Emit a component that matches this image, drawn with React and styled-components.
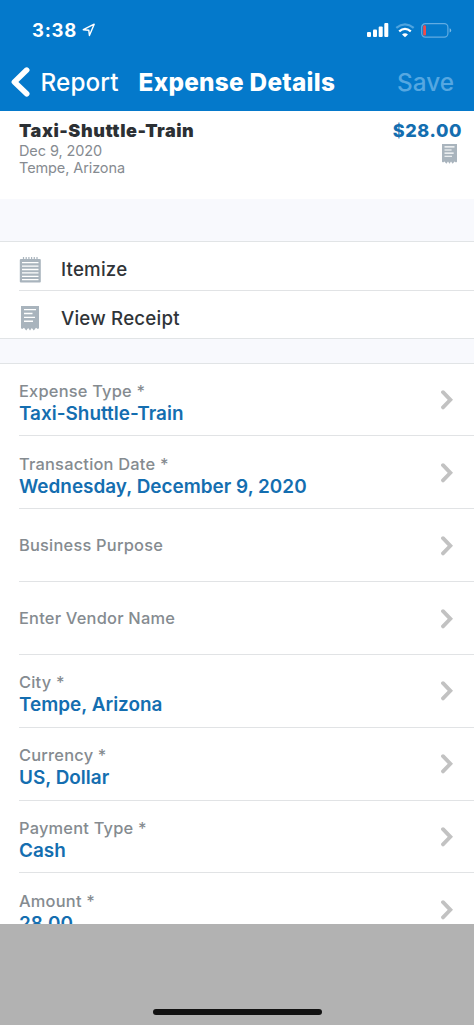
import React from "react";
import styled, { createGlobalStyle } from "styled-components";

const GlobalStyle = createGlobalStyle`
  * { box-sizing: border-box; }
  body { margin: 0; background: #fff; font-family: Inter, "Liberation Sans", sans-serif; }
`;

const Screen = styled.main`
  width: 474px;
  height: 1025px;
  overflow: hidden;
  display: flex;
  flex-direction: column;
  background: #fff;
`;

const Header = styled.header`
  flex: none;
  height: 110.5px;
  background: #0479cb;
  color: #fff;
`;

const StatusBar = styled.div`
  height: 58px;
  padding: 2px 22px 0 32px;
  display: flex;
  align-items: center;
  justify-content: space-between;
`;

const StatusGroup = styled.div`
  display: flex;
  align-items: center;
  gap: ${(p) => p.$gap}px;
`;

const Clock = styled.span`
  font-size: 18.5px;
  font-weight: 700;
  letter-spacing: 0.75px;
`;

const NavBar = styled.nav`
  height: 48px;
  padding: 0 20px 0 11px;
  display: flex;
  align-items: center;
`;

const NavText = styled.span`
  font-size: 24.3px;
  line-height: 30px;
  font-weight: ${(p) => p.$weight || 500};
  letter-spacing: ${(p) => p.$spacing || 0}px;
  color: ${(p) => p.$color || "#fff"};
  margin-left: ${(p) => p.$left};
  white-space: nowrap;
`;

const Summary = styled.section`
  flex: none;
  height: 88.5px;
  padding: 9.5px 12px 0 19px;
  display: flex;
  justify-content: space-between;
`;

const SummaryColumn = styled.div`
  display: flex;
  flex-direction: column;
  align-items: ${(p) => p.$align || "flex-start"};
`;

const SummaryTitle = styled.span`
  font-size: 18px;
  line-height: 22px;
  font-weight: ${(p) => p.$weight};
  letter-spacing: ${(p) => p.$spacing}px;
  color: ${(p) => p.$color};
`;

const SummaryMeta = styled.span`
  font-size: 14.5px;
  line-height: 17.3px;
  letter-spacing: -0.1px;
  color: #868b91;
`;

const ReceiptSlot = styled.div`
  margin: 2px 5px 0 0;
  line-height: 0;
`;

const Band = styled.div`
  flex: none;
  height: ${(p) => p.$height}px;
  background: #f8f9fd;
  border-bottom: 1px solid #e1e4e6;
`;

const ActionList = styled.section`
  flex: none;
  border-bottom: 1px solid #e1e4e6;
`;

const Action = styled.div`
  height: ${(p) => (p.$last ? 47.5 : 48.5)}px;
  padding-top: 8px;
  margin-left: 19px;
  display: flex;
  align-items: center;
  font-size: 18.7px;
  font-weight: 500;
  letter-spacing: 0.2px;
  color: #303438;
  border-bottom: ${(p) => (p.$last ? "none" : "1px solid #e1e3e5")};
`;

const ActionIcon = styled.span`
  width: 42px;
  line-height: 0;
  padding-left: ${(p) => p.$inset || 0}px;
`;

const Fields = styled.section`
  flex: 1;
  min-height: 0;
  overflow: hidden;
`;

const Field = styled.div`
  height: 72.85px;
  margin-left: 19px;
  padding: 1.3px 21px 0 0;
  display: flex;
  align-items: center;
  justify-content: space-between;
  border-bottom: 1px solid #e1e3e5;
`;

const FieldText = styled.div`
  display: flex;
  flex-direction: column;
  padding-top: 6px;
  padding-bottom: ${(p) => (p.$single ? 6 : 0)}px;
`;

const Label = styled.span`
  font-size: 16.4px;
  line-height: 21px;
  font-weight: 500;
  letter-spacing: 0.22px;
  color: #858b90;
`;

const Value = styled.span`
  font-size: 18.9px;
  line-height: 23px;
  font-weight: 600;
  letter-spacing: 0.02px;
  color: #146eb0;
`;

const HomeArea = styled.footer`
  flex: none;
  height: 101px;
  background: #b2b2b2;
  display: flex;
  justify-content: center;
  align-items: flex-end;
  padding: 0 0 10px 1px;
`;

const HomeIndicator = styled.div`
  width: 169px;
  height: 6px;
  border-radius: 3px;
  background: #121212;
`;

const LocationIcon = () => (
  <svg width="14" height="14" viewBox="0 0 14 14" fill="none">
    <path d="M1.3 6.7 12.2 1.2 7.4 12.5 6.8 7.2Z" stroke="#fff" strokeWidth="1.4" strokeLinejoin="round" />
  </svg>
);

const SignalIcon = () => (
  <svg width="22" height="14" viewBox="0 0 22 14" fill="#fff">
    <rect x="0" y="9" width="4" height="5" rx="1" />
    <rect x="6" y="6.5" width="4" height="7.5" rx="1" />
    <rect x="11.7" y="3.5" width="4" height="10.5" rx="1" />
    <rect x="17.3" y="0" width="4" height="14" rx="1" />
  </svg>
);

const WifiIcon = () => (
  <svg width="20" height="15" viewBox="0 0 20 15" fill="none" strokeWidth="2.3">
    <path d="M1.3 4.8Q10-2 18.7 4.8" stroke="#4fa4df" />
    <path d="M4.2 8.4Q10 3.4 15.8 8.4" stroke="#fff" />
    <path d="M7 11.6Q10 8.9 13 11.6L10 14.2Z" fill="#fff" />
  </svg>
);

const BatteryIcon = () => (
  <svg width="31" height="15" viewBox="0 0 31 15" fill="none">
    <rect x="0.7" y="0.7" width="26.2" height="13.4" rx="3.6" stroke="#62ace2" strokeWidth="1.2" />
    <rect x="2.2" y="2.3" width="2.8" height="10.2" rx="1.2" fill="#ef4b4b" />
    <path d="M28.6 5.2Q30.2 5.8 30.2 7.4T28.6 9.6Z" fill="#79b9e6" />
  </svg>
);

const BackIcon = () => (
  <svg width="19" height="30" viewBox="0 0 19 30" fill="none">
    <path d="M15.7 3.1 3.4 14.9 15.7 26.7" stroke="#fff" strokeWidth="5.6" strokeLinecap="round" strokeLinejoin="round" />
  </svg>
);

const ReceiptIcon = ({ width, height }) => (
  <svg width={width} height={height} viewBox="0 0 18 25" preserveAspectRatio="none">
    <path d="M0 0H18V20H0Z" fill="#a9b4bd" />
    <path d="M0 20H18V22.2L16.8 23L15 21.8L12.8 24.6L10.8 22L9 24.6L7.2 22L5.2 24.6L3 21.8L1.2 23L0 22.2Z" fill="#a9b4bd" />
    <path d="M3 3.6H15M3 7.5H11.5M3 11.4H14M3 15.3H12" stroke="#fff" strokeWidth="1.4" />
  </svg>
);

const NotepadIcon = () => (
  <svg width="22" height="26" viewBox="0 0 22 26">
    <rect x="0.8" y="2" width="21" height="23.6" rx="1" fill="#a9b4bd" />
    <path d="M4.5 0V3M7.2 0V3M9.9 0V3M12.6 0V3M15.3 0V3M18 0V3" stroke="#a9b4bd" strokeWidth="1.2" />
    <path d="M3 5.7H19.5M3 9.1H19.5M3 12.5H19.5M3 15.9H19.5M3 19.3H19.5M3 22.6H19.5" stroke="#fff" strokeWidth="1.3" />
  </svg>
);

const Chevron = () => (
  <svg width="12" height="20" viewBox="0 0 12 20" fill="none">
    <path d="M2 2.2 9.4 9.8 2 17.4" stroke="#c2c2c2" strokeWidth="3.8" strokeLinecap="round" />
  </svg>
);

const fields = [
  { label: "Expense Type *", value: "Taxi-Shuttle-Train" },
  { label: "Transaction Date *", value: "Wednesday, December 9, 2020" },
  { label: "Business Purpose" },
  { label: "Enter Vendor Name" },
  { label: "City *", value: "Tempe, Arizona" },
  { label: "Currency *", value: "US, Dollar" },
  { label: "Payment Type *", value: "Cash" },
  { label: "Amount *", value: "28.00" },
];

export default function App() {
  return (
    <>
      <GlobalStyle />
      <Screen>
        <Header>
          <StatusBar>
            <StatusGroup $gap={5}>
              <Clock>3:38</Clock>
              <LocationIcon />
            </StatusGroup>
            <StatusGroup $gap={6}>
              <SignalIcon />
              <WifiIcon />
              <BatteryIcon />
            </StatusGroup>
          </StatusBar>
          <NavBar>
            <BackIcon />
            <NavText $left="10.5px" $spacing={0.1}>Report</NavText>
            <NavText $left="20px" $weight={800} $spacing={0.3}>Expense Details</NavText>
            <NavText $left="auto" $color="#55a7e1">Save</NavText>
          </NavBar>
        </Header>
        <Summary>
          <SummaryColumn>
            <SummaryTitle $color="#2c3034" $weight={900} $spacing={0.55}>Taxi-Shuttle-Train</SummaryTitle>
            <SummaryMeta>Dec 9, 2020</SummaryMeta>
            <SummaryMeta>Tempe, Arizona</SummaryMeta>
          </SummaryColumn>
          <SummaryColumn $align="flex-end">
            <SummaryTitle $color="#146eb0" $weight={800} $spacing={0.6}>$28.00</SummaryTitle>
            <ReceiptSlot>
              <ReceiptIcon width={15} height={20} />
            </ReceiptSlot>
          </SummaryColumn>
        </Summary>
        <Band $height={43} />
        <ActionList>
          <Action>
            <ActionIcon><NotepadIcon /></ActionIcon>
            Itemize
          </Action>
          <Action $last>
            <ActionIcon $inset={2}><ReceiptIcon width={18} height={25} /></ActionIcon>
            View Receipt
          </Action>
        </ActionList>
        <Band $height={24.5} />
        <Fields>
          {fields.map((f) => (
            <Field key={f.label}>
              <FieldText $single={!f.value}>
                <Label>{f.label}</Label>
                {f.value && <Value>{f.value}</Value>}
              </FieldText>
              <Chevron />
            </Field>
          ))}
        </Fields>
        <HomeArea>
          <HomeIndicator />
        </HomeArea>
      </Screen>
    </>
  );
}
